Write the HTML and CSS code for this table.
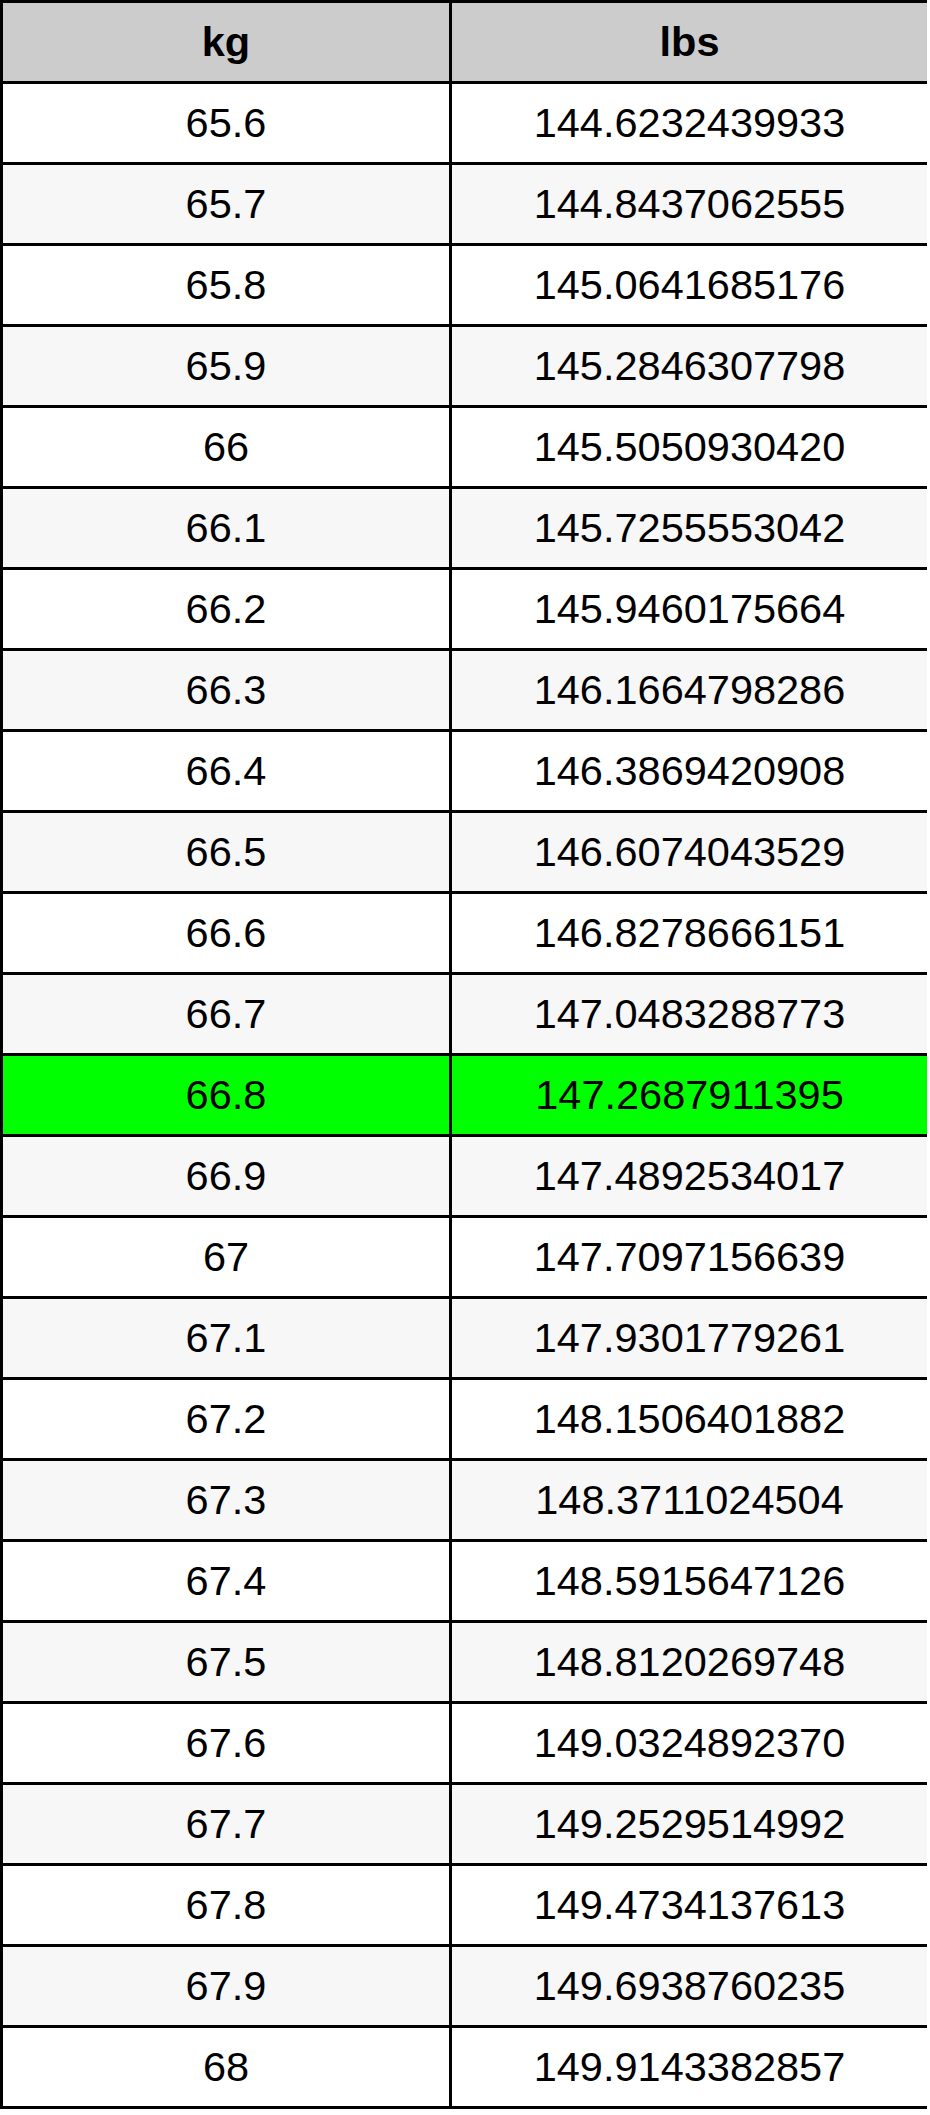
FILE: index.html
```html
<!DOCTYPE html>
<html>
<head>
<meta charset="utf-8">
<link rel="stylesheet" href="styles.css">
</head>
<body>
<div class="table">
  <div class="cell head">kg</div><div class="cell head">lbs</div>
  <div class="cell">65.6</div><div class="cell">144.6232439933</div>
  <div class="cell alt">65.7</div><div class="cell alt">144.8437062555</div>
  <div class="cell">65.8</div><div class="cell">145.0641685176</div>
  <div class="cell alt">65.9</div><div class="cell alt">145.2846307798</div>
  <div class="cell">66</div><div class="cell">145.5050930420</div>
  <div class="cell alt">66.1</div><div class="cell alt">145.7255553042</div>
  <div class="cell">66.2</div><div class="cell">145.9460175664</div>
  <div class="cell alt">66.3</div><div class="cell alt">146.1664798286</div>
  <div class="cell">66.4</div><div class="cell">146.3869420908</div>
  <div class="cell alt">66.5</div><div class="cell alt">146.6074043529</div>
  <div class="cell">66.6</div><div class="cell">146.8278666151</div>
  <div class="cell alt">66.7</div><div class="cell alt">147.0483288773</div>
  <div class="cell hl">66.8</div><div class="cell hl">147.2687911395</div>
  <div class="cell alt">66.9</div><div class="cell alt">147.4892534017</div>
  <div class="cell">67</div><div class="cell">147.7097156639</div>
  <div class="cell alt">67.1</div><div class="cell alt">147.9301779261</div>
  <div class="cell">67.2</div><div class="cell">148.1506401882</div>
  <div class="cell alt">67.3</div><div class="cell alt">148.3711024504</div>
  <div class="cell">67.4</div><div class="cell">148.5915647126</div>
  <div class="cell alt">67.5</div><div class="cell alt">148.8120269748</div>
  <div class="cell">67.6</div><div class="cell">149.0324892370</div>
  <div class="cell alt">67.7</div><div class="cell alt">149.2529514992</div>
  <div class="cell">67.8</div><div class="cell">149.4734137613</div>
  <div class="cell alt">67.9</div><div class="cell alt">149.6938760235</div>
  <div class="cell">68</div><div class="cell">149.9143382857</div>
</div>
</body>
</html>
```
FILE: styles.css
```css
html, body {
  margin: 0;
  padding: 0;
  background: #ffffff;
}
.table {
  display: grid;
  grid-template-columns: 446px 475px;
  grid-auto-rows: 78px;
  gap: 3px;
  padding: 3px;
  background: #000000;
  width: 921px;
  font-family: "Liberation Sans", Arial, sans-serif;
  font-size: 41.5px;
  color: #000000;
}
.cell {
  display: flex;
  align-items: center;
  justify-content: center;
  background: #ffffff;
  line-height: 1;
}
.cell.alt {
  background: #f7f7f7;
}
.cell.head {
  background: #cccccc;
  font-weight: bold;
}
.cell.hl {
  background: #00ff00;
}
```
